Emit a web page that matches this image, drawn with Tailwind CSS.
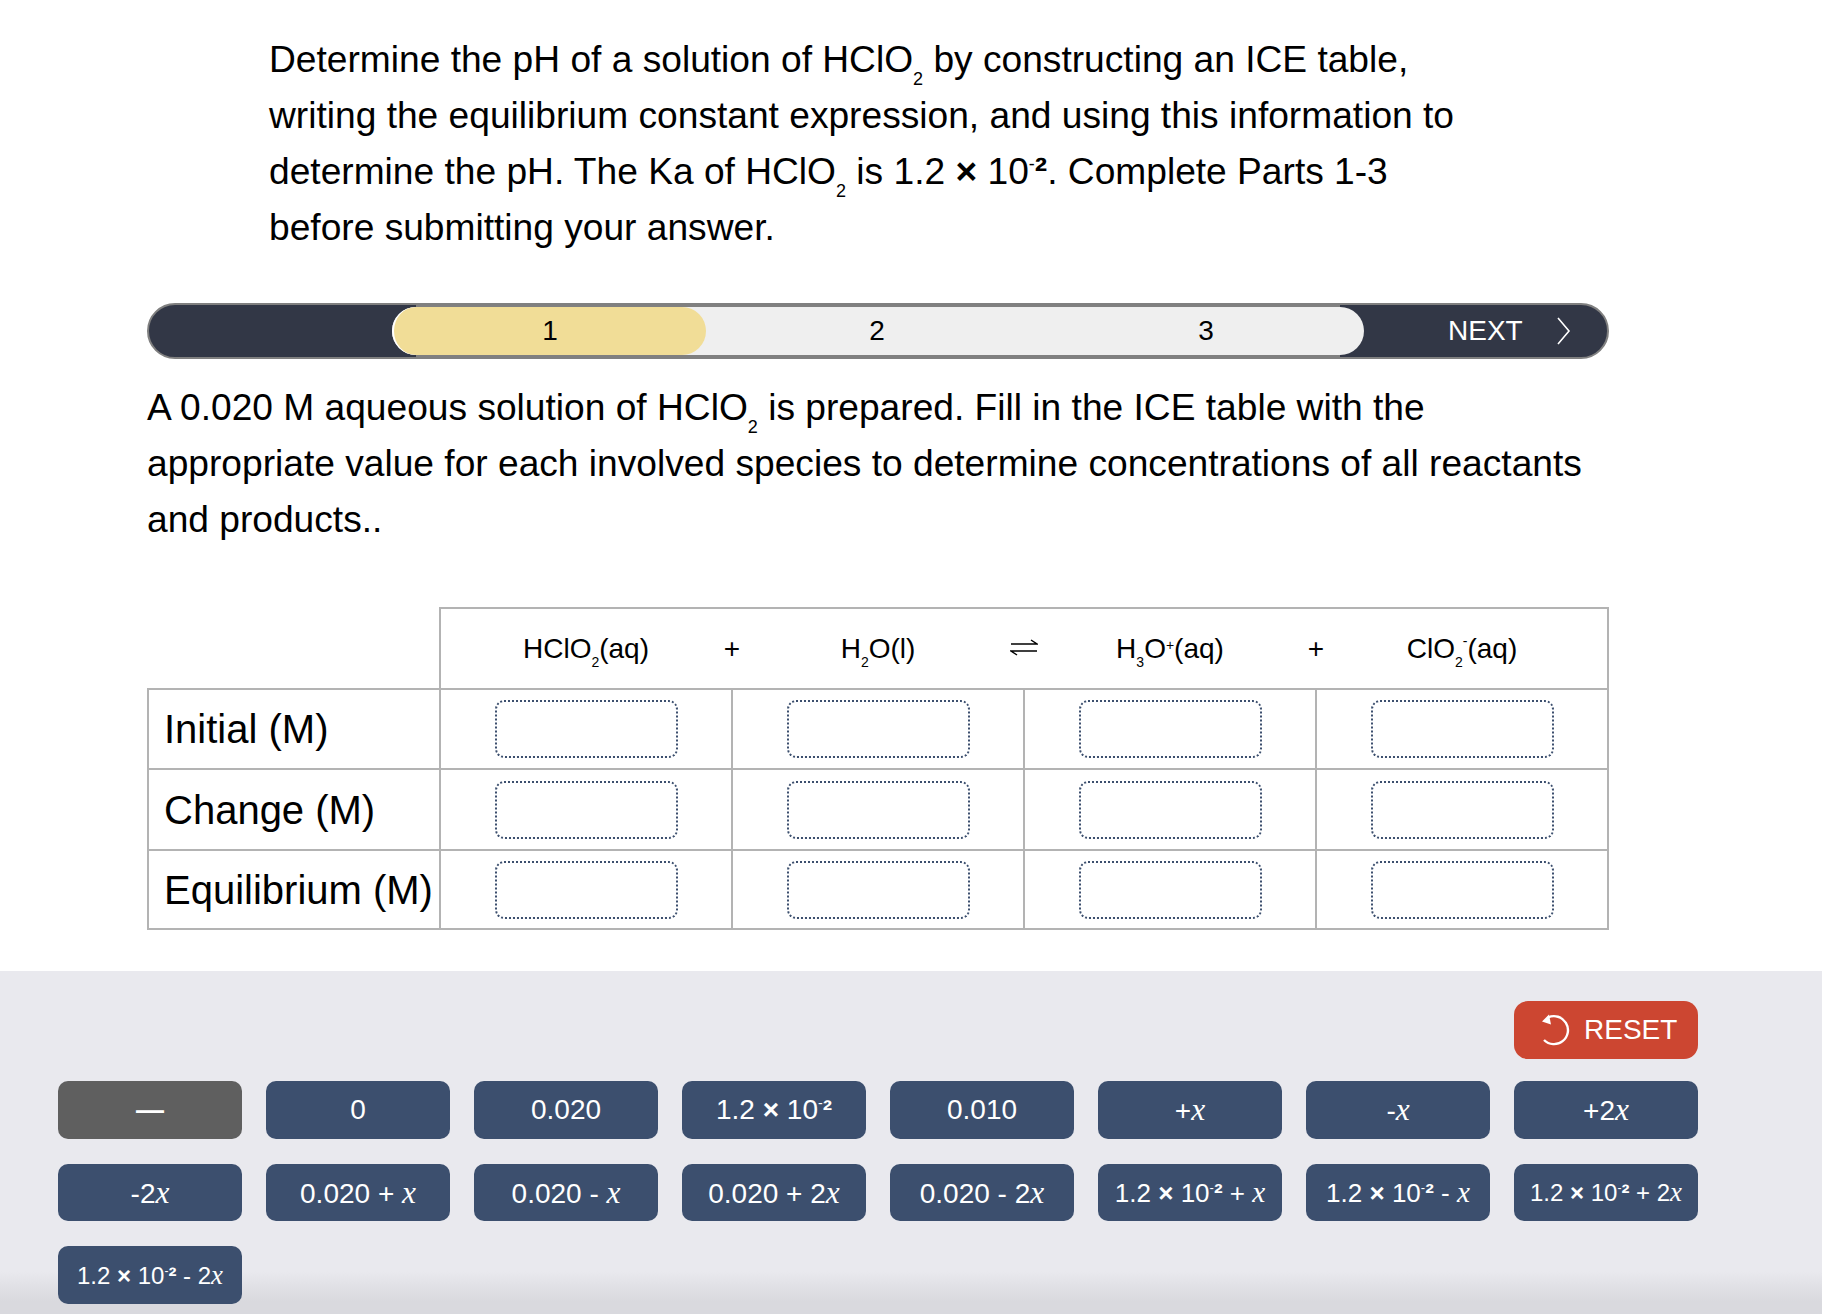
<!DOCTYPE html>
<html lang="en">
<head>
    <meta charset="UTF-8">
    <meta name="viewport" content="width=device-width, initial-scale=1.0">
    <title>ICE Table</title>
    <script src="https://cdn.jsdelivr.net/npm/@tailwindcss/browser@4"></script>
</head>
<body class="bg-white font-['Liberation_Sans',Arial,sans-serif] text-black overflow-hidden">
    <div class="h-[1314px] flex flex-col">

        <!-- question -->
        <div class="h-[971px] shrink-0 pl-[147px] pr-[213px] pt-[31px]">
            <p class="ml-[122px] text-[37.15px] leading-[56px] w-[1220px]">
                Determine the pH of a solution of HClO<sub class="static text-[18px] leading-[0] align-[-13px]">2</sub> by constructing an ICE table, writing the equilibrium constant expression, and using this information to determine the pH. The Ka of HClO<sub class="static text-[18px] leading-[0] align-[-13px]">2</sub> is 1.2 <b>×</b> 10<sup class="static text-[18px] leading-[0] align-[14px]">-</sup><b>²</b>. Complete Parts 1-3 before submitting your answer.
            </p>

            <!-- stepper -->
            <div class="mt-[48px] w-[1462px] h-[56px] rounded-[28px] bg-[#323746] border-[2px] border-[#808080] flex items-center overflow-hidden">
                <div class="w-[243px] shrink-0"></div>
                <div class="h-full w-[972px] shrink-0 flex items-center bg-[linear-gradient(to_right,#323746_24px,#808080_24px,#808080_948px,#323746_948px)]">
                    <div class="h-[48px] w-full flex rounded-[24px] bg-[#efefef] text-[28px]">
                        <div class="w-[314px] rounded-[24px] bg-[#f1dd97] border-l-[2px] border-white flex items-center justify-center">1</div>
                        <div class="w-[342px] flex items-center justify-center">2</div>
                        <div class="w-[316px] flex items-center justify-center">3</div>
                    </div>
                </div>
                <div class="flex-1 flex items-center text-white text-[28px] pl-[84px]">
                    <span>NEXT</span>
                    <svg class="ml-[34px]" width="14" height="28" viewBox="0 0 14 28" fill="none" stroke="#ffffff" stroke-width="1.6"><path d="M1 1 L12 14 L1 27"/></svg>
                </div>
            </div>

            <p class="mt-[20px] text-[37.15px] leading-[56px] w-[1445px]">
                A 0.020 M aqueous solution of HClO<sub class="static text-[18px] leading-[0] align-[-13px]">2</sub> is prepared. Fill in the ICE table with the appropriate value for each involved species to determine concentrations of all reactants and products..
            </p>

            <!-- ICE table -->
            <div class="mt-[60px] w-[1462px] grid grid-cols-[292px_292px_292px_292px_294px] grid-rows-[81px_80px_81px_81px]">
                <div></div>
                <div class="col-span-4 border-2 border-[#b3b3b3] border-b-0 px-[72px] grid grid-cols-7 items-center text-center text-[28px] whitespace-nowrap">
                    <div>HClO<sub class="static text-[14px] leading-[0] align-[-9px]">2</sub>(aq)</div>
                    <div>+</div>
                    <div>H<sub class="static text-[14px] leading-[0] align-[-9px]">2</sub>O(l)</div>
                    <div class="flex justify-center -mt-[1px]">
                        <svg width="28" height="18" viewBox="0 0 28 18" fill="none" stroke="#000000" stroke-width="1.5"><path d="M1 5 H27 L21 1"/><path d="M27 12 H1 L7 16"/></svg>
                    </div>
                    <div>H<sub class="static text-[14px] leading-[0] align-[-9px]">3</sub>O<sup class="static text-[14px] leading-[0] align-[8px]">+</sup>(aq)</div>
                    <div>+</div>
                    <div>ClO<sub class="static text-[14px] leading-[0] align-[-9px]">2</sub><sup class="static text-[14px] leading-[0] align-[12px]">-</sup>(aq)</div>
                </div>

                <div class="border-2 border-r-0 border-b-0 border-[#b3b3b3] flex items-center pl-[15px] text-[40px]">Initial (M)</div>
                <div class="border-2 border-r-0 border-b-0 border-[#b3b3b3] flex items-center justify-center"><div class="w-[183px] h-[58px] rounded-[9px] border-2 border-dotted border-[#3c4f6e]"></div></div>
                <div class="border-2 border-r-0 border-b-0 border-[#b3b3b3] flex items-center justify-center"><div class="w-[183px] h-[58px] rounded-[9px] border-2 border-dotted border-[#3c4f6e]"></div></div>
                <div class="border-2 border-r-0 border-b-0 border-[#b3b3b3] flex items-center justify-center"><div class="w-[183px] h-[58px] rounded-[9px] border-2 border-dotted border-[#3c4f6e]"></div></div>
                <div class="border-2 border-b-0 border-[#b3b3b3] flex items-center justify-center"><div class="w-[183px] h-[58px] rounded-[9px] border-2 border-dotted border-[#3c4f6e]"></div></div>

                <div class="border-2 border-r-0 border-b-0 border-[#b3b3b3] flex items-center pl-[15px] text-[40px]">Change (M)</div>
                <div class="border-2 border-r-0 border-b-0 border-[#b3b3b3] flex items-center justify-center"><div class="w-[183px] h-[58px] rounded-[9px] border-2 border-dotted border-[#3c4f6e]"></div></div>
                <div class="border-2 border-r-0 border-b-0 border-[#b3b3b3] flex items-center justify-center"><div class="w-[183px] h-[58px] rounded-[9px] border-2 border-dotted border-[#3c4f6e]"></div></div>
                <div class="border-2 border-r-0 border-b-0 border-[#b3b3b3] flex items-center justify-center"><div class="w-[183px] h-[58px] rounded-[9px] border-2 border-dotted border-[#3c4f6e]"></div></div>
                <div class="border-2 border-b-0 border-[#b3b3b3] flex items-center justify-center"><div class="w-[183px] h-[58px] rounded-[9px] border-2 border-dotted border-[#3c4f6e]"></div></div>

                <div class="border-2 border-r-0 border-[#b3b3b3] flex items-center pl-[15px] text-[40px] whitespace-nowrap">Equilibrium (M)</div>
                <div class="border-2 border-r-0 border-[#b3b3b3] flex items-center justify-center"><div class="w-[183px] h-[58px] rounded-[9px] border-2 border-dotted border-[#3c4f6e]"></div></div>
                <div class="border-2 border-r-0 border-[#b3b3b3] flex items-center justify-center"><div class="w-[183px] h-[58px] rounded-[9px] border-2 border-dotted border-[#3c4f6e]"></div></div>
                <div class="border-2 border-r-0 border-[#b3b3b3] flex items-center justify-center"><div class="w-[183px] h-[58px] rounded-[9px] border-2 border-dotted border-[#3c4f6e]"></div></div>
                <div class="border-2 border-[#b3b3b3] flex items-center justify-center"><div class="w-[183px] h-[58px] rounded-[9px] border-2 border-dotted border-[#3c4f6e]"></div></div>
            </div>
        </div>

        <!-- answer tray -->
        <div class="flex-1 bg-[linear-gradient(to_bottom,#e9e9ee_0,#e9e9ee_300px,#d9d9de_330px,#d9d9de_100%)] pl-[58px] pt-[30px] text-white">
            <div class="w-[1640px] flex justify-end mb-[22px]">
                <div class="w-[184px] h-[58px] rounded-[14px] bg-[#cc4631] flex items-center pl-[27px] gap-[11px] text-[28px]">
                    <svg width="32" height="32" viewBox="0 0 32 32" fill="none" stroke="#ffffff" stroke-width="2.4"><path d="M7 3.5 A14 14 0 1 1 3 26"/><path d="M1 7.5 L8 0.5 L10 10.5 Z" fill="#ffffff" stroke="none"/></svg>
                    <span>RESET</span>
                </div>
            </div>
            <div class="grid grid-cols-[repeat(8,184px)] grid-rows-[58px_57px_58px] gap-x-6 gap-y-[25px] text-[28px]">
                <div class="rounded-[10px] bg-[#5f5f5f] flex items-center justify-center font-bold">—</div>
                <div class="rounded-[10px] bg-[#3c4f6e] flex items-center justify-center">0</div>
                <div class="rounded-[10px] bg-[#3c4f6e] flex items-center justify-center">0.020</div>
                <div class="rounded-[10px] bg-[#3c4f6e] flex items-center justify-center"><span>1.2 <b>×</b> 10<sup class="static text-[14px] leading-[0] align-[11px]">-</sup><b>²</b></span></div>
                <div class="rounded-[10px] bg-[#3c4f6e] flex items-center justify-center">0.010</div>
                <div class="rounded-[10px] bg-[#3c4f6e] flex items-center justify-center"><span>+<i class="font-['Liberation_Serif',serif] text-[1.12em]">x</i></span></div>
                <div class="rounded-[10px] bg-[#3c4f6e] flex items-center justify-center"><span>-<i class="font-['Liberation_Serif',serif] text-[1.12em]">x</i></span></div>
                <div class="rounded-[10px] bg-[#3c4f6e] flex items-center justify-center"><span>+2<i class="font-['Liberation_Serif',serif] text-[1.12em]">x</i></span></div>

                <div class="rounded-[10px] bg-[#3c4f6e] flex items-center justify-center"><span>-2<i class="font-['Liberation_Serif',serif] text-[1.12em]">x</i></span></div>
                <div class="rounded-[10px] bg-[#3c4f6e] flex items-center justify-center"><span>0.020 + <i class="font-['Liberation_Serif',serif] text-[1.12em]">x</i></span></div>
                <div class="rounded-[10px] bg-[#3c4f6e] flex items-center justify-center"><span>0.020 - <i class="font-['Liberation_Serif',serif] text-[1.12em]">x</i></span></div>
                <div class="rounded-[10px] bg-[#3c4f6e] flex items-center justify-center"><span>0.020 + 2<i class="font-['Liberation_Serif',serif] text-[1.12em]">x</i></span></div>
                <div class="rounded-[10px] bg-[#3c4f6e] flex items-center justify-center"><span>0.020 - 2<i class="font-['Liberation_Serif',serif] text-[1.12em]">x</i></span></div>
                <div class="rounded-[10px] bg-[#3c4f6e] flex items-center justify-center text-[26px] whitespace-nowrap"><span>1.2 <b>×</b> 10<sup class="static text-[13px] leading-[0] align-[10px]">-</sup><b>²</b> + <i class="font-['Liberation_Serif',serif] text-[1.12em]">x</i></span></div>
                <div class="rounded-[10px] bg-[#3c4f6e] flex items-center justify-center text-[26px] whitespace-nowrap"><span>1.2 <b>×</b> 10<sup class="static text-[13px] leading-[0] align-[10px]">-</sup><b>²</b> - <i class="font-['Liberation_Serif',serif] text-[1.12em]">x</i></span></div>
                <div class="rounded-[10px] bg-[#3c4f6e] flex items-center justify-center text-[24px] whitespace-nowrap"><span>1.2 <b>×</b> 10<sup class="static text-[12px] leading-[0] align-[9px]">-</sup><b>²</b> + 2<i class="font-['Liberation_Serif',serif] text-[1.12em]">x</i></span></div>

                <div class="rounded-[10px] bg-[#3c4f6e] flex items-center justify-center text-[24px] whitespace-nowrap"><span>1.2 <b>×</b> 10<sup class="static text-[12px] leading-[0] align-[9px]">-</sup><b>²</b> - 2<i class="font-['Liberation_Serif',serif] text-[1.12em]">x</i></span></div>
            </div>
        </div>
    </div>
</body>
</html>
